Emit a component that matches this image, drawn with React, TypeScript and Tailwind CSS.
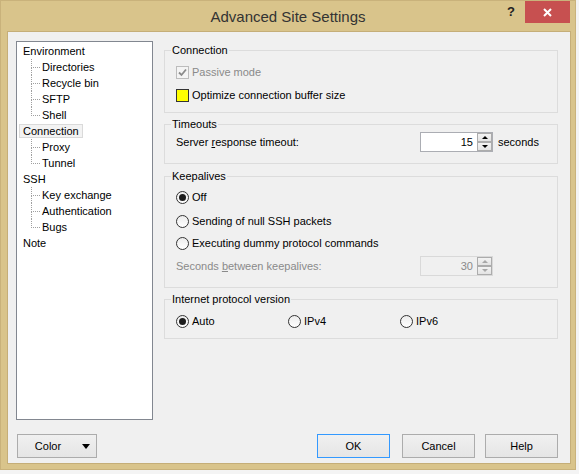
import * as React from "react";

type TreeNode = { label: string; children: string[]; selected?: boolean };

const tree: TreeNode[] = [
  { label: "Environment", children: ["Directories", "Recycle bin", "SFTP", "Shell"] },
  { label: "Connection", children: ["Proxy", "Tunnel"], selected: true },
  { label: "SSH", children: ["Key exchange", "Authentication", "Bugs"] },
  { label: "Note", children: [] },
];

function TreeView() {
  return (
    <div className="h-[379px] w-[137px] border border-[#828790] bg-white pt-px">
      {tree.map((node) => (
        <div key={node.label}>
          <div className="flex h-[16px] items-center">
            {node.selected ? (
              <span className="ml-[2px] flex h-[14px] items-center border border-[#dadada] bg-[#f3f3f3] px-[3px] leading-[12px]">
                {node.label}
              </span>
            ) : (
              <span className="pl-[6px] leading-[16px]">{node.label}</span>
            )}
          </div>
          {node.children.map((child, i) => {
            const last = i === node.children.length - 1;
            return (
              <div key={child} className="ml-[14px] flex h-[16px]">
                <div className="flex w-[9px] flex-col">
                  <div className="h-[9px] border-b border-l border-dotted border-[#a0a0a0]" />
                  <div className={last ? "flex-1" : "flex-1 border-l border-dotted border-[#a0a0a0]"} />
                </div>
                <span className="ml-[2px] leading-[16px]">{child}</span>
              </div>
            );
          })}
        </div>
      ))}
    </div>
  );
}

function Group({
  title,
  className,
  children,
}: {
  title: string;
  className: string;
  children: React.ReactNode;
}) {
  return (
    <fieldset className={`border border-[#dcdcdc] pl-[11px] ${className}`}>
      <legend className="-ml-[5px] px-px leading-[14px]">{title}</legend>
      {children}
    </fieldset>
  );
}

function Radio({ label, checked }: { label: string; checked?: boolean }) {
  return (
    <div className="flex h-[20px] items-center">
      <span className="flex h-[13px] w-[13px] items-center justify-center rounded-full border border-[#333] bg-gradient-to-b from-[#ececec] to-white">
        {checked && <span className="h-[7px] w-[7px] rounded-full bg-[#1c1c1c]" />}
      </span>
      <span className="ml-[3px]">{label}</span>
    </div>
  );
}

function SpinArrow({ up, disabled }: { up?: boolean; disabled?: boolean }) {
  const color = disabled ? "border-b-[#a8a8a8] border-t-[#a8a8a8]" : "border-b-black border-t-black";
  return (
    <div className="flex h-[9px] items-center justify-center border border-[#acacac] bg-gradient-to-b from-[#f3f3f3] to-[#e3e3e3]">
      <span
        className={`h-0 w-0 border-x-[3px] border-x-transparent ${color} ${
          up ? "border-b-[3px]" : "border-t-[3px]"
        }`}
      />
    </div>
  );
}

function SpinBox({ value, disabled }: { value: number; disabled?: boolean }) {
  return (
    <div
      className={`flex h-[20px] w-[73px] border ${
        disabled ? "border-[#d9d9d9] bg-[#f0f0f0] text-[#8a8a8a]" : "border-[#abadb3] bg-white"
      }`}
    >
      <div className="flex flex-1 items-center justify-end pr-[4px]">{value}</div>
      <div className="flex w-[15px] flex-col">
        <SpinArrow up disabled={disabled} />
        <SpinArrow disabled={disabled} />
      </div>
    </div>
  );
}

function Button({
  label,
  className = "",
  focused,
}: {
  label: string;
  className?: string;
  focused?: boolean;
}) {
  return (
    <button
      className={`flex h-[24px] w-[73px] items-center justify-center border bg-gradient-to-b from-[#f0f0f0] to-[#e5e5e5] ${
        focused ? "border-[#3399ff]" : "border-[#acacac]"
      } ${className}`}
    >
      {label}
    </button>
  );
}

export default function App() {
  return (
    <div className="h-[474px] w-[579px] overflow-hidden bg-[#f4f4f4] font-['Liberation_Sans',Arial,sans-serif] text-[11px] text-black">
      <div className="flex h-[470px] w-[576px] flex-col border border-[#c9b27b] bg-[#d9c48b]">
        {/* title bar */}
        <div className="grid h-[30px] grid-cols-[1fr_auto_1fr]">
          <div />
          <div className="pt-[6px] text-[15px] leading-[20px] text-[#333]">Advanced Site Settings</div>
          <div className="flex items-start justify-end">
            <span className="mr-[10px] mt-[4px] text-[13px] font-bold leading-[14px] text-[#222]">?</span>
            <button className="mr-[5px] flex h-[22px] w-[45px] items-center justify-center bg-[#c75050]">
              <svg width="9" height="9" viewBox="0 0 9 9">
                <path d="M1 1 L8 8 M8 1 L1 8" stroke="white" strokeWidth="2" />
              </svg>
            </button>
          </div>
        </div>

        {/* client area */}
        <div className="mb-[5px] ml-[6px] mr-[4px] flex flex-1 flex-col border border-[#c5ae78] bg-[#f0f0f0] pl-[8px] pt-[9px]">
          <div className="flex gap-[11px]">
            <TreeView />

            <div className="flex w-[394px] flex-col">
              <Group title="Connection" className="mt-[2px] h-[70px]">
                <div className="flex h-[20px] items-center mt-[5px] text-[#8a8a8a]">
                  <span className="flex h-[13px] w-[13px] items-center justify-center border border-[#bcbcbc] bg-[#f4f4f4]">
                    <svg width="9" height="9" viewBox="0 0 9 9">
                      <path d="M1 4.5 L3.5 7 L8 1.5" fill="none" stroke="#8a8a8a" strokeWidth="1.8" />
                    </svg>
                  </span>
                  <span className="ml-[3px]">Passive mode</span>
                </div>
                <div className="mt-[3px] flex h-[20px] items-center">
                  <span className="h-[13px] w-[13px] border border-[#333] bg-[#ffff00]" />
                  <span className="ml-[3px]">Optimize connection buffer size</span>
                </div>
              </Group>

              <Group title="Timeouts" className="mt-[4px] h-[47px]">
                <div className="mt-[1px] flex h-[20px] items-center">
                  <span className="w-[244px]">
                    Server <u>r</u>esponse timeout:
                  </span>
                  <SpinBox value={15} />
                  <span className="ml-[5px]">seconds</span>
                </div>
              </Group>

              <Group title="Keepalives" className="mt-[5px] h-[119px]">
                <div className="mt-[4px]">
                  <Radio label="Off" checked />
                </div>
                <div className="mt-[4px]">
                  <Radio label="Sending of null SSH packets" />
                </div>
                <div className="mt-[2px]">
                  <Radio label="Executing dummy protocol commands" />
                </div>
                <div className="mt-[3px] flex h-[20px] items-center text-[#8a8a8a]">
                  <span className="w-[244px]">
                    Seconds <u>b</u>etween keepalives:
                  </span>
                  <SpinBox value={30} disabled />
                </div>
              </Group>

              <Group title="Internet protocol version" className="mt-[4px] h-[47px]">
                <div className="mt-[5px] grid grid-cols-[112px_112px_112px]">
                  <Radio label="Auto" checked />
                  <Radio label="IPv4" />
                  <Radio label="IPv6" />
                </div>
              </Group>
            </div>
          </div>

          {/* dialog buttons */}
          <div className="mt-[14px] flex">
            <button className="ml-px flex h-[24px] w-[80px] items-center border border-[#acacac] bg-gradient-to-b from-[#f0f0f0] to-[#e5e5e5]">
              <span className="flex-1 pr-[4px] text-center">Color</span>
              <span className="mr-[6px] h-0 w-0 border-x-[4px] border-t-[5px] border-x-transparent border-t-black" />
            </button>
            <Button label="OK" focused className="ml-[220px]" />
            <Button label="Cancel" className="ml-[12px]" />
            <Button label="Help" className="ml-[10px]" />
          </div>
        </div>
      </div>
    </div>
  );
}
